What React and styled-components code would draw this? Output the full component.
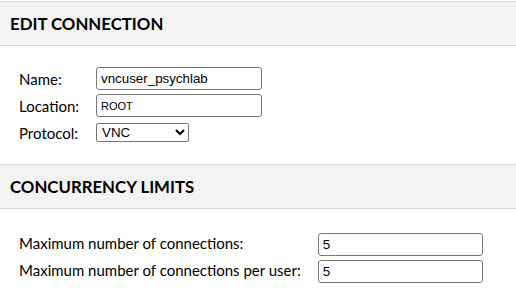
import React from 'react';
import styled, { createGlobalStyle } from 'styled-components';

const GlobalStyle = createGlobalStyle`
  html, body {
    margin: 0;
    padding: 0;
    background: #ffffff;
  }
  body {
    font-family: Lato, "Noto Sans", sans-serif;
    font-size: 15px;
    color: #000000;
  }
`;

const Page = styled.div`
  width: 516px;
  height: 305px;
  padding-top: 1px;
  box-sizing: border-box;
  overflow: hidden;
`;

const SectionHeader = styled.div`
  height: 45px;
  box-sizing: border-box;
  background-color: #f3f3f3;
  border-top: 1px solid #dcdcdc;
  border-bottom: 1px solid #d4d4d4;
  padding: 0 10px;
`;

const Title = styled.h2`
  margin: 0;
  font-size: 16.8px;
  font-weight: 700;
  line-height: 43px;
  text-transform: uppercase;
`;

const FormBody = styled.div`
  display: grid;
  grid-template-columns: auto auto;
  justify-content: start;
  column-gap: 17px;
  padding: ${(p) => p.$top}px 19px ${(p) => p.$bottom}px;
`;

const Label = styled.label`
  display: flex;
  align-items: center;
  height: 27px;
  line-height: 18px;
  padding-bottom: ${(p) => (p.$raise ? 3 : 0)}px;
  box-sizing: border-box;
  white-space: nowrap;
`;

const Field = styled.div`
  display: flex;
  align-items: center;
  height: 27px;
`;

const TextInput = styled.input`
  box-sizing: border-box;
  width: ${(p) => p.$width}px;
  height: 23px;
  margin: 0;
  padding: 1px 4px;
  border: 1px solid #767676;
  border-radius: 3px;
  font-family: "Liberation Sans", Arial, sans-serif;
  font-size: ${(p) => p.$size || 13.33}px;
  color: #000000;
  background: #ffffff;
  outline: none;
`;

const Select = styled.select`
  box-sizing: border-box;
  width: 93px;
  height: 19px;
  margin: 0;
  padding: 0 0 0 1px;
  border: 1px solid #767676;
  border-radius: 2px;
  font-family: "Liberation Sans", Arial, sans-serif;
  font-size: 13.33px;
  color: #000000;
  background: #ffffff;
`;

export default function App() {
  return (
    <Page>
      <GlobalStyle />
      <SectionHeader>
        <Title>Edit Connection</Title>
      </SectionHeader>
      <FormBody $top={19} $bottom={18}>
        <Label>Name:</Label>
        <Field>
          <TextInput $width={166} defaultValue="vncuser_psychlab" />
        </Field>
        <Label>Location:</Label>
        <Field>
          <TextInput $width={166} $size={11} defaultValue="ROOT" />
        </Field>
        <Label>Protocol:</Label>
        <Field>
          <Select defaultValue="vnc">
            <option value="vnc">VNC</option>
            <option value="rdp">RDP</option>
            <option value="ssh">SSH</option>
          </Select>
        </Field>
      </FormBody>
      <SectionHeader>
        <Title>Concurrency Limits</Title>
      </SectionHeader>
      <FormBody $top={22} $bottom={0}>
        <Label $raise>Maximum number of connections:</Label>
        <Field>
          <TextInput $width={165} defaultValue="5" />
        </Field>
        <Label $raise>Maximum number of connections per user:</Label>
        <Field>
          <TextInput $width={165} defaultValue="5" />
        </Field>
      </FormBody>
    </Page>
  );
}
